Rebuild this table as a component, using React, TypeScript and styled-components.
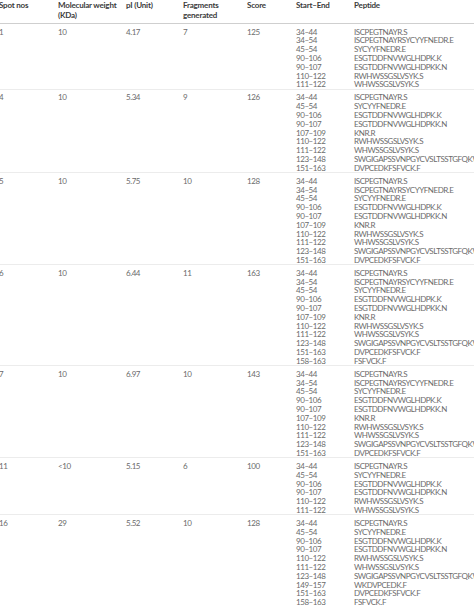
import * as React from 'react';
import styled, { createGlobalStyle } from 'styled-components';

const GlobalStyle = createGlobalStyle`
  html, body {
    margin: 0;
    padding: 0;
    background: #ffffff;
    overflow: hidden;
  }
  body {
    font-family: Lato, "Noto Sans", "Liberation Sans", sans-serif;
  }
`

const COLS = '59px 68px 57px 64px 49px 58px 1fr';

const Page = styled.div`
  width: 474px;
  height: 606px;
  overflow: hidden;
`

const Table = styled.div`
  margin-left: -1px;
  width: 560px;
`

const HeadRow = styled.div`
  display: grid;
  grid-template-columns: ${COLS};
  border-bottom: 1px solid #cfcfcf;
  padding-bottom: 3px;
`

const HeadCell = styled.div`
  font-size: 8px;
  font-weight: 700;
  line-height: 10px;
  letter-spacing: -0.2px;
  color: #3b3b3b;
  white-space: pre-line;
`

const BodyRow = styled.div<{ $first?: boolean }>`
  display: grid;
  grid-template-columns: ${COLS};
  padding: 3.6px 0 0.6px;
  border-top: ${(p) => (p.$first ? 'none' : '1px solid #ececec')};
  margin-top: ${(p) => (p.$first ? '0' : '-1px')};
`

const Cell = styled.div`
  font-size: 8px;
  line-height: 8.8px;
  letter-spacing: -0.45px;
  color: #6b6b6b;
  white-space: nowrap;
`

const Lines = styled.div`
  display: flex;
  flex-direction: column;
`

type Row = {
  spot: string;
  mw: string;
  pi: string;
  frag: string;
  score: string;
  hits: string[][];
};

const A = ['34–44', 'ISCPEGTNAYR.S'];
const B = ['34–54', 'ISCPEGTNAYRSYCYYFNEDR.E'];
const C = ['45–54', 'SYCYYFNEDR.E'];
const D = ['90–106', 'ESGTDDFNVWGLHDPK.K'];
const E = ['90–107', 'ESGTDDFNVWGLHDPKK.N'];
const F = ['107–109', 'KNR.R'];
const G = ['110–122', 'RWHWSSGSLVSYK.S'];
const H = ['111–122', 'WHWSSGSLVSYK.S'];
const I = ['123–148', 'SWGIGAPSSVNPGYCVSLTSSTGFQKWSK.W'];
const J = ['151–163', 'DVPCEDKFSFVCK.F'];
const K = ['158–163', 'FSFVCK.F'];
const L = ['149–157', 'WKDVPCEDK.F'];

const rows: Row[] = [
  { spot: '1', mw: '10', pi: '4.17', frag: '7', score: '125', hits: [A, B, C, D, E, G, H] },
  { spot: '4', mw: '10', pi: '5.34', frag: '9', score: '126', hits: [A, C, D, E, F, G, H, I, J] },
  { spot: '5', mw: '10', pi: '5.75', frag: '10', score: '128', hits: [A, B, C, D, E, F, G, H, I, J] },
  { spot: '6', mw: '10', pi: '6.44', frag: '11', score: '163', hits: [A, B, C, D, E, F, G, H, I, J, K] },
  { spot: '7', mw: '10', pi: '6.97', frag: '10', score: '143', hits: [A, B, C, D, E, F, G, H, I, J] },
  { spot: '11', mw: '<\u200a10', pi: '5.15', frag: '6', score: '100', hits: [A, C, D, E, G, H] },
  { spot: '16', mw: '29', pi: '5.52', frag: '10', score: '128', hits: [A, C, D, E, G, H, I, L, J, K] },
];

const headers = [
  'Spot nos',
  'Molecular weight\n(KDa)',
  'pI (Unit)',
  'Fragments\ngenerated',
  'Score',
  'Start–End',
  'Peptide',
];

export default function App() {
  return (
    <Page>
      <GlobalStyle />
      <Table>
        <HeadRow>
          {headers.map((h) => (
            <HeadCell key={h}>{h}</HeadCell>
          ))}
        </HeadRow>
        {rows.map((r, i) => (
          <BodyRow key={r.spot} $first={i === 0}>
            <Cell>{r.spot}</Cell>
            <Cell>{r.mw}</Cell>
            <Cell>{r.pi}</Cell>
            <Cell>{r.frag}</Cell>
            <Cell>{r.score}</Cell>
            <Lines>
              {r.hits.map((h, j) => (
                <Cell key={j}>{h[0]}</Cell>
              ))}
            </Lines>
            <Lines>
              {r.hits.map((h, j) => (
                <Cell key={j}>{h[1]}</Cell>
              ))}
            </Lines>
          </BodyRow>
        ))}
      </Table>
    </Page>
  );
}
